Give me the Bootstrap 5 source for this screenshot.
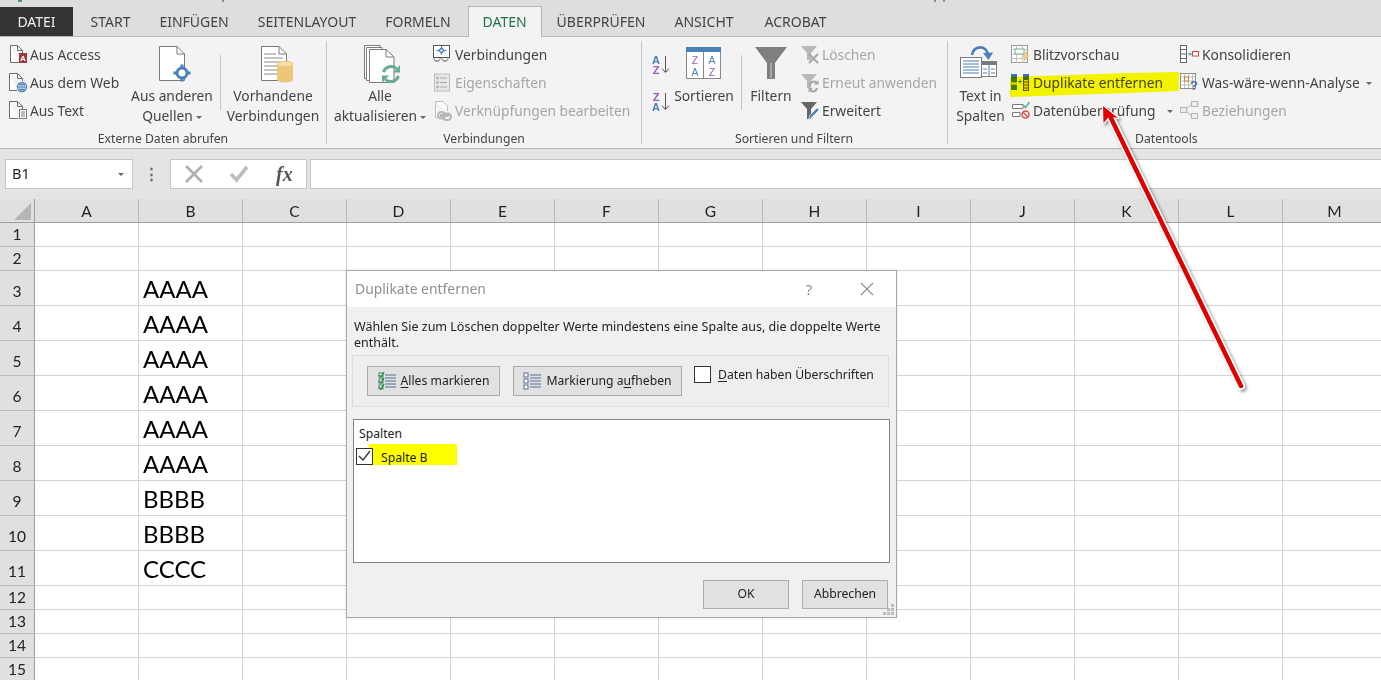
<!DOCTYPE html>
<html lang="de">
<head>
<meta charset="utf-8">
<title>Duplikate entfernen</title>
<link href="https://cdn.jsdelivr.net/npm/bootstrap@5.3.0/dist/css/bootstrap.min.css" rel="stylesheet">
<style>
html,body{width:1381px;height:680px;overflow:hidden;background:#fff;}
body{position:relative;font-family:"Noto Sans","Open Sans",sans-serif;font-size:13.8px;color:#444;}
.tabbar{height:37px;background:#dedede;border-bottom:1px solid #b5b5b5;padding-top:7px;}
.tab-item{height:30px;line-height:29px;font-size:14px;color:#444;padding:0 14.5px;text-align:center;white-space:nowrap;}
.tab-file{width:73px;padding:0;background:#333;color:#f0f0f0;height:29px;margin-right:3px;}
.tab-active{background:#f3f3f3;border:1px solid #b5b5b5;border-bottom:0;color:#217346;margin:-1px .5px 0 2.5px;height:31px;padding:0;width:74px;}
.tab-last{margin-left:2px;}
.ribbon{height:112px;background:#f3f3f3;border-bottom:1px solid #b5b5b5;position:relative;}
.rgroup{margin-top:4px;height:103px;border-right:1px solid #c6c6c6;flex:none;}
.rg1{width:327px}.rg2{width:315px}.rg3{width:306px}.rg4{width:433px;border-right:0}
.rbody{height:87px;}
.rlabel{height:16px;line-height:22px;font-size:12.2px;text-align:center;color:#444;white-space:nowrap;}
.rstack{flex:none;}
.ritem{height:28px;white-space:nowrap;gap:2px;}
.ritem svg{flex:none;}
.off{color:#a6a6a6;}
.rbig{flex:none;height:85px;text-align:center;line-height:20px;white-space:nowrap;}
.rbig svg{display:block;}
.rsep{flex:none;width:1px;height:55px;background:#c6c6c6;margin-top:14px;}
.drop{display:inline-block;width:0;height:0;border:3px solid transparent;border-top:3.5px solid #666;border-bottom:0;margin-left:3px;vertical-align:2px;}
.hi{position:absolute;left:1009px;top:-3px;mix-blend-mode:multiply;pointer-events:none;}
.fbar{height:50px;background:#e4e4e4;padding:10px 0 0 5px;}
.fbox{height:30px;background:#fff;border:1px solid #c6c6c6;flex:none;}
.fname{width:128px;padding:0 8px 0 6px;font-size:14.6px;color:#222;}
.fdots{width:37px;flex:none;color:#666;font-size:15px;font-weight:700;text-align:center;line-height:28px;}
.ficons{width:137px;}
.fx-mark{font-family:"Liberation Serif",serif;font-style:italic;font-weight:700;font-size:20px;color:#555;line-height:1;}
.fmain{margin-left:3px;flex:1 1 auto;border-right:0;}
.sheetwrap{width:1381px;height:481px;overflow:hidden;}
.sheet{table-layout:fixed;width:1387px;border-collapse:separate;border-spacing:0;}
.sheet th,.sheet td{padding:0;border-right:1px solid #d4d4d4;border-bottom:1px solid #d4d4d4;font-weight:400;}
.sheet thead th{height:24px;background:#e0e0e0;text-align:center;font-size:15.5px;font-family:"Lato",sans-serif;color:#222;border-bottom:1px solid #9f9f9f;border-right:1px solid #b8b8b8;line-height:21px;padding-top:2px;}
.sheet thead .corner{width:35px;padding-top:0;line-height:1;position:relative;border-right:1px solid #9f9f9f;}
.sheet tbody th{width:35px;background:#e0e0e0;text-align:center;vertical-align:bottom;font-size:15.5px;font-family:"Lato",sans-serif;color:#222;border-right:1px solid #9f9f9f;border-bottom:1px solid #b8b8b8;line-height:22px;}
.sheet td{font-family:"Lato",sans-serif;font-size:24px;color:#000;padding-left:4px;line-height:33px;vertical-align:bottom;white-space:nowrap;}
.r-s{height:24px}.r-t{height:35px}
.sheet tbody .r-t th{padding-bottom:3px}
.sheet tbody .r-s th{padding-bottom:1px}
.dlg{position:absolute;left:346px;top:270px;width:551px;height:348px;background:#f0f0f0;border:1px solid #a8a8a8;box-shadow:0 0 2px rgba(0,0,0,.15);}
.dlg-head{height:36px;background:#fff;padding:0 0 0 8px;color:#8f8f8f;font-size:13.9px;}
.dlg-q{width:12px;margin-left:auto;color:#8f8f8f;font-size:15px;text-align:center;margin-right:45px;}
.dlg-x{margin-right:22px;}
.dlg-text{font-size:12.5px;line-height:16px;color:#222;padding:12px 6px 0 7px;height:48px;white-space:nowrap;}
.dlg-panel{margin-left:5px;width:537px;height:52px;background:#eee;border:1px solid #dcdcdc;padding:10px 0 0 14px;}
.dlg-btn{height:30px;background:#e1e1e1;border:1px solid #adadad;border-radius:0;color:#222;font-size:12.2px;padding:0;flex:none;--bs-btn-hover-bg:#e1e1e1;}
.b-all{width:133px;margin-right:13px}.b-none{width:169px;margin-right:12px}
.tick{width:17px;height:17px;border:1px solid #333;background:#fff;flex:none;}
.chk-label{font-size:12.2px;color:#222;margin:1px 0 0 7px;line-height:16px;white-space:nowrap;}
.dlg-list{margin:12px 0 0 6px;width:537px;height:144px;background:#fff;border:1px solid #82828f;font-size:12.2px;color:#222;position:relative;padding:5px 0 0 5px;}
.list-row{margin:2px 0 0 -3px;height:22px;position:relative;}
.list-mark{position:absolute;left:13px;top:-1px;width:88px;height:21px;background:#ff0;}
.list-row .tick{position:relative;}
.list-row span{position:relative;margin-left:8px;padding-top:4px;}
.dlg-foot{padding-top:17px;margin-left:356px;gap:13px;}
.dlg-ok{width:86px;height:29px;}
.grip{position:absolute;right:1px;bottom:1px;}
.arrow{position:absolute;left:0;top:0;pointer-events:none;}
u{text-underline-offset:2px;}
</style>
</head>
<body>
<nav class="tabbar d-flex">
  <div class="tab-item tab-file">DATEI</div>
  <div class="tab-item">START</div>
  <div class="tab-item">EINFÜGEN</div>
  <div class="tab-item">SEITENLAYOUT</div>
  <div class="tab-item">FORMELN</div>
  <div class="tab-item tab-active">DATEN</div>
  <div class="tab-item">ÜBERPRÜFEN</div>
  <div class="tab-item">ANSICHT</div>
  <div class="tab-item tab-last">ACROBAT</div>
</nav>

<section class="ribbon d-flex">
  <div class="rgroup rg1">
    <div class="rbody d-flex">
      <div class="rstack" style="margin-left:8px;width:123px">
        <div class="ritem d-flex align-items-center">
          <svg width="20" height="20" viewBox="0 0 20 20"><path d="M2.5.5H9.5L14.5 5.5V8M9.5.5V5.5H14.5M2.5.5V17.5H11" fill="#fff" stroke="#6e6e6e"/><rect x="11" y="8" width="8" height="10" fill="#a4373a"/><text x="15" y="16" text-anchor="middle" font-size="8" font-weight="700" fill="#fff" font-family="Liberation Sans">A</text></svg>
          <span>Aus Access</span></div>
        <div class="ritem d-flex align-items-center">
          <svg width="20" height="20" viewBox="0 0 20 20"><path d="M1.5.5H9.5L14.5 5.5V8M9.5.5V5.5H14.5M1.5.5V17.5H9" fill="#fff" stroke="#6e6e6e"/><circle cx="14" cy="14" r="4.6" fill="#fff" stroke="#4a7ebb" stroke-width="1.2"/><path d="M9.5 14H18.5M14 9.5V18.5M10.5 11.5H17.5M10.5 16.5H17.5" stroke="#4a7ebb" fill="none" stroke-width=".9"/><ellipse cx="14" cy="14" rx="2.2" ry="4.6" fill="none" stroke="#4a7ebb" stroke-width=".9"/></svg>
          <span>Aus dem Web</span></div>
        <div class="ritem d-flex align-items-center">
          <svg width="20" height="20" viewBox="0 0 20 20"><path d="M1.5.5H9.5L14.5 5.5V8M9.5.5V5.5H14.5M1.5.5V17.5H10" fill="#fff" stroke="#6e6e6e"/><rect x="11.5" y="8.5" width="7" height="9" fill="#fff" stroke="#7a7a7a"/><path d="M13 11H17M13 13H17M13 15H17" stroke="#7a7a7a"/></svg>
          <span>Aus Text</span></div>
      </div>
      <div class="rbig" style="width:82px">
        <svg width="82" height="45" viewBox="0 0 82 45"><path d="M28.5 5.5H46L53.5 13V39.5H28.5Z" fill="#fff" stroke="#7a7a7a"/><path d="M46 5.5V13H53.5" fill="none" stroke="#7a7a7a"/><circle cx="51" cy="32" r="5" fill="#fff" stroke="#4a80b8" stroke-width="3"/><path d="M51 23.5V27M51 37V40.5M42.5 32H46M56 32H59.5" stroke="#4a80b8" stroke-width="3"/></svg>
        Aus anderen<br>Quellen<span class="drop"></span>
      </div>
      <div class="rsep" style="margin-left:7px"></div>
      <div class="rbig" style="width:94px;margin-left:5px">
        <svg width="94" height="45" viewBox="0 0 94 45"><path d="M35.5 5.5H53L60.5 13V39.5H35.5Z" fill="#fff" stroke="#7a7a7a"/><path d="M53 5.5V13H60.5" fill="none" stroke="#7a7a7a"/><path d="M38 13H50M38 17H57M38 21H57M38 25H51M38 29H51M38 33H51" stroke="#8a8a8a"/><path d="M51 23V38.5C51 42.5 67 42.5 67 38.5V23Z" fill="#eec67a"/><ellipse cx="59" cy="23" rx="8" ry="2.6" fill="#f6dfae" stroke="#eec67a"/></svg>
        Vorhandene<br>Verbindungen
      </div>
    </div>
    <div class="rlabel" style="width:326px">Externe Daten abrufen</div>
  </div>

  <div class="rgroup rg2">
    <div class="rbody d-flex">
      <div class="rbig" style="width:94px;margin-left:6px">
        <svg width="94" height="45" viewBox="0 0 94 45"><path d="M31.5 4.5H47V37.5H31.5Z" fill="#fff" stroke="#7a7a7a"/><path d="M33.5 6.5H49V39.5H33.5Z" fill="#fff" stroke="#7a7a7a"/><path d="M36.5 8.5H53L61 16V41.5H36.5Z" fill="#fff" stroke="#7a7a7a"/><path d="M53 8.5V16H61" fill="none" stroke="#7a7a7a"/><path d="M50.500 31A8 8 0 0 1 63.500 27.500" fill="none" stroke="#6aab93" stroke-width="3"/><path d="M67 24V31.500H60Z" fill="#6aab93"/><path d="M65.500 35A8 8 0 0 1 52.500 38.500" fill="none" stroke="#6aab93" stroke-width="3"/><path d="M49 42V34.500H56Z" fill="#6aab93"/></svg>
        Alle<br>aktualisieren<span class="drop"></span>
      </div>
      <div class="rstack" style="margin-left:6px">
        <div class="ritem d-flex align-items-center">
          <svg width="20" height="20" viewBox="0 0 20 20"><rect x=".5" y=".5" width="16" height="12" fill="#fff" stroke="#555"/><path d="M8.500 3L11 5.500 8.500 8 6 5.500Z" fill="none" stroke="#4a7ebb" stroke-width="1.500"/><path d="M8.500 1V3M8.500 8V10M3.500 5.500H6M11 5.500H13.500" stroke="#4a7ebb"/><path d="M1 13.500C1 17 7 17 7 13.500M9 13.500C9 17 15 17 15 13.500" fill="none" stroke="#555"/></svg>
          <span>Verbindungen</span></div>
        <div class="ritem d-flex align-items-center off">
          <svg width="20" height="20" viewBox="0 0 20 20"><rect x="1.500" y="1" width="15" height="17" fill="#e6e6e6" stroke="#bdbdbd"/><path d="M7 5H14M7 9.500H14M7 14H14" stroke="#a8a8a8"/><circle cx="4.500" cy="5" r="1.200" fill="#a8a8a8"/><circle cx="4.500" cy="9.500" r="1.200" fill="#a8a8a8"/><circle cx="4.500" cy="14" r="1.200" fill="#a8a8a8"/></svg>
          <span>Eigenschaften</span></div>
        <div class="ritem d-flex align-items-center off">
          <svg width="20" height="20" viewBox="0 0 20 20"><path d="M2.500.5H10L14.500 5V10M2.500.5V16.500H5" fill="#fff" stroke="#bdbdbd"/><path d="M7 14.500H16" stroke="#b5b5b5" stroke-width="3"/><rect x="5" y="11" width="7" height="6.500" rx="3.200" fill="none" stroke="#b5b5b5" stroke-width="2"/><rect x="10" y="12.500" width="8" height="6.500" rx="3.200" fill="none" stroke="#b5b5b5" stroke-width="2"/></svg>
          <span>Verknüpfungen bearbeiten</span></div>
      </div>
    </div>
    <div class="rlabel" style="width:314px">Verbindungen</div>
  </div>

  <div class="rgroup rg3">
    <div class="rbody d-flex">
      <div class="rstack d-flex flex-column" style="margin-left:8px;padding-top:14px;gap:17px">
        <svg width="20" height="20" viewBox="0 0 20 20"><text x="6" y="9" text-anchor="middle" font-size="11" font-weight="700" fill="#4a80b8" font-family="Liberation Sans">A</text><text x="6" y="19" text-anchor="middle" font-size="11" font-weight="700" fill="#9a5bbd" font-family="Liberation Sans">Z</text><path d="M15.500 1V17M12 13.500L15.500 17.500 19 13.500" fill="none" stroke="#555"/></svg>
        <svg width="20" height="20" viewBox="0 0 20 20"><text x="6" y="9" text-anchor="middle" font-size="11" font-weight="700" fill="#9a5bbd" font-family="Liberation Sans">Z</text><text x="6" y="19" text-anchor="middle" font-size="11" font-weight="700" fill="#4a80b8" font-family="Liberation Sans">A</text><path d="M15.500 1V17M12 13.500L15.500 17.500 19 13.500" fill="none" stroke="#555"/></svg>
      </div>
      <div class="rbig" style="width:64px;margin-left:2px">
        <svg width="64" height="45" viewBox="0 0 64 45"><rect x="14.500" y="6.500" width="34" height="31" fill="#fff" stroke="#8a8a8a"/><rect x="14" y="6" width="35" height="5" fill="#4a80b8"/><path d="M31.500 11V37" stroke="#8a8a8a"/><text x="23" y="22.500" text-anchor="middle" font-size="10.400" fill="#9a5bbd" font-family="Liberation Sans">Z</text><text x="23" y="34.500" text-anchor="middle" font-size="10.400" fill="#4a80b8" font-family="Liberation Sans">A</text><text x="40" y="22.500" text-anchor="middle" font-size="10.400" fill="#4a80b8" font-family="Liberation Sans">A</text><text x="40" y="34.500" text-anchor="middle" font-size="10.400" fill="#9a5bbd" font-family="Liberation Sans">Z</text></svg>
        Sortieren
      </div>
      <div class="rsep" style="margin-left:5px"></div>
      <div class="rbig" style="width:48px;margin-left:5px">
        <svg width="48" height="45" viewBox="0 0 48 45"><path d="M8 6H40L28 22V38H20V22Z" fill="#7f7f7f"/><path d="M24 22V37" stroke="#a9a9a9" stroke-width="2"/></svg>
        Filtern
      </div>
      <div class="rstack" style="margin-left:5px">
        <div class="ritem d-flex align-items-center off">
          <svg width="20" height="20" viewBox="0 0 20 20"><path d="M1 1H17L11 8V15H7V8Z" fill="#b8b8b8"/><path d="M9 9L18 18M18 9L9 18" stroke="#a6a6a6" stroke-width="2"/></svg>
          <span>Löschen</span></div>
        <div class="ritem d-flex align-items-center off">
          <svg width="20" height="20" viewBox="0 0 20 20"><path d="M1 1H17L11 8V15H7V8Z" fill="#b8b8b8"/><path d="M10 13A4 4 0 0 1 17 10M17 15A4 4 0 0 1 10 17" fill="none" stroke="#a6a6a6" stroke-width="2"/><path d="M18.500 7V11.500H14ZM8.500 19.500V15H13Z" fill="#a6a6a6"/></svg>
          <span>Erneut anwenden</span></div>
        <div class="ritem d-flex align-items-center">
          <svg width="20" height="20" viewBox="0 0 20 20"><path d="M1 1H17L11 8V18H7V8Z" fill="#666"/><path d="M8 19L10 14 17 7 19 9 12 16Z" fill="#4a80b8" stroke="#f3f3f3" stroke-width=".6"/></svg>
          <span>Erweitert</span></div>
      </div>
    </div>
    <div class="rlabel" style="width:304px">Sortieren und Filtern</div>
  </div>

  <div class="rgroup rg4">
    <div class="rbody d-flex">
      <div class="rbig" style="width:55px;margin-left:5px">
        <svg width="55" height="45" viewBox="0 0 55 45"><rect x="7.500" y="16.500" width="21" height="20" fill="#fff" stroke="#7a7a7a"/><path d="M10 20H26M10 23H26M10 26H26M10 29H26M10 32H26" stroke="#4a7ebb"/><rect x="28.500" y="20.500" width="15" height="15" fill="#fff" stroke="#7a7a7a"/><rect x="28" y="20" width="16" height="4" fill="#7a7a7a"/><path d="M36 24V35M30 28H34M38 28H42M30 32H34M38 32H42" stroke="#4a7ebb"/><path d="M19 14C21 4 33 4 35 13" fill="none" stroke="#4a7ebb" stroke-width="2.600"/><path d="M30 12L35.500 19 40 11.500Z" fill="#4a7ebb"/></svg>
        Text in<br>Spalten
      </div>
      <div class="rstack" style="width:169px;margin-left:3px">
        <div class="ritem d-flex align-items-center">
          <svg width="20" height="20" viewBox="0 0 20 20"><rect x=".5" y=".5" width="16" height="17" fill="#fff" stroke="#9a9a9a"/><path d="M.5 4.500H16.500M.5 9H16.500M.5 13.500H16.500M5.500.5V17.500M11.500.5V17.500" stroke="#c4c4c4"/><rect x="4" y="4" width="9" height="5" fill="#fff" stroke="#6aab93"/><path d="M15 6L10.500 12.500H14L11.500 18.500 18 10.500H14.500L17.500 6Z" fill="#eec67a"/></svg>
          <span>Blitzvorschau</span></div>
        <div class="ritem d-flex align-items-center">
          <svg width="20" height="20" viewBox="0 0 20 20"><rect x="0" y="1" width="6" height="5" fill="#3f6fb5"/><rect x="0" y="6" width="6" height="11" fill="#3f7f3f"/><path d="M0 10.500H6" stroke="#e8c84a" stroke-width="2.500"/><rect x="12" y="1" width="6" height="5" fill="#3f6fb5"/><rect x="12.500" y="6.500" width="5" height="11" fill="#f0d050" stroke="#5a5a20"/><path d="M12.500 9H17.500M12.500 12H17.500M12.500 15H17.500" stroke="#5a5a20"/><path d="M7 8.500H11M9 6.500V10.500" stroke="#3f8f3f"/></svg>
          <span>Duplikate entfernen</span></div>
        <div class="ritem d-flex align-items-center">
          <svg width="20" height="20" viewBox="0 0 20 20"><path d="M1.500 3.500H12V7.500H1.500ZM1.500 11.500H9V15.500H1.500Z" fill="#fff" stroke="#7a7a7a"/><path d="M12 4L14.500 6.500 18.500 1" fill="none" stroke="#6aab93" stroke-width="1.600"/><circle cx="14.500" cy="13.500" r="3.500" fill="#fff" stroke="#d9534f" stroke-width="1.500"/><path d="M12 11L17 16" stroke="#d9534f" stroke-width="1.500"/></svg>
          <span>Datenüberprüfung</span><span class="drop" style="margin-left:9px"></span></div>
      </div>
      <div class="rstack">
        <div class="ritem d-flex align-items-center">
          <svg width="20" height="20" viewBox="0 0 20 20"><rect x=".5" y=".5" width="6" height="17" fill="#fff" stroke="#666"/><path d="M.5 4.500H6.500M.5 9H6.500M.5 13.500H6.500" stroke="#666"/><path d="M8 9H11M10 7.500L11.500 9 10 10.500" fill="none" stroke="#4a7ebb"/><rect x="12.500" y="6.500" width="6" height="4.500" fill="#fff" stroke="#d0492f"/></svg>
          <span>Konsolidieren</span></div>
        <div class="ritem d-flex align-items-center">
          <svg width="20" height="20" viewBox="0 0 20 20"><rect x=".5" y=".5" width="15" height="15" fill="#fff" stroke="#8a8a8a"/><path d="M.5 4H15.500M.5 8H15.500M.5 12H15.500M4.500.5V15.500M8.500.5V15.500M12.500.5V15.500" stroke="#bdbdbd"/><rect x="4.500" y="4" width="4" height="4" fill="#fff" stroke="#d87b2f"/><text x="14" y="17" text-anchor="middle" font-size="13" font-weight="700" fill="#3f74b5" font-family="Liberation Sans">?</text></svg>
          <span>Was-wäre-wenn-Analyse</span><span class="drop" style="margin-left:4px"></span></div>
        <div class="ritem d-flex align-items-center off">
          <svg width="20" height="20" viewBox="0 0 20 20"><rect x=".5" y="6.500" width="6" height="5" fill="#eee" stroke="#b5b5b5"/><rect x="11.500" y=".5" width="6" height="5" fill="#eee" stroke="#b5b5b5"/><rect x="11.500" y="12.500" width="6" height="5" fill="#eee" stroke="#b5b5b5"/><path d="M6.500 8L11.500 3M6.500 10L11.500 15" stroke="#b5b5b5"/></svg>
          <span>Beziehungen</span></div>
      </div>
    </div>
    <div class="rlabel" style="width:433px;padding-left:187px;padding-right:0;text-align:left">Datentools</div>
  </div>
  <svg class="hi" width="172" height="66" viewBox="0 0 172 66"><path d="M1 43L60 41 120 39 170 38V57L120 59 60 61 1 63Z" fill="#ff0"/></svg>
</section>

<section class="fbar d-flex">
  <div class="fbox fname d-flex align-items-center justify-content-between"><span>B1</span><span class="drop"></span></div>
  <div class="fdots">⋮</div>
  <div class="fbox ficons d-flex align-items-center">
    <svg style="margin-left:13px" width="20" height="20" viewBox="0 0 20 20"><path d="M2 2L18 18M18 2L2 18" stroke="#b0b0b0" stroke-width="2.600"/></svg>
    <svg style="margin-left:25px" width="20" height="20" viewBox="0 0 20 20"><path d="M2 10L7.500 16 18 3" fill="none" stroke="#bdbdbd" stroke-width="3.600"/></svg>
    <span class="fx-mark" style="margin-left:27px">fx</span>
  </div>
  <div class="fbox fmain"></div>
</section>

<div class="sheetwrap">
<table class="sheet">
  <thead><tr>
    <th class="corner"><svg class="d-block" style="margin:3px 0 0 14px" width="18" height="18" viewBox="0 0 18 18"><path d="M17 0V17H0Z" fill="#b5b5b5"/></svg></th>
    <th>A</th><th>B</th><th>C</th><th>D</th><th>E</th><th>F</th><th>G</th><th>H</th><th>I</th><th>J</th><th>K</th><th>L</th><th>M</th>
  </tr></thead>
  <tbody>
    <tr class="r-s"><th>1</th><td></td><td></td><td></td><td></td><td></td><td></td><td></td><td></td><td></td><td></td><td></td><td></td><td></td></tr>
    <tr class="r-s"><th>2</th><td></td><td></td><td></td><td></td><td></td><td></td><td></td><td></td><td></td><td></td><td></td><td></td><td></td></tr>
    <tr class="r-t"><th>3</th><td></td><td>AAAA</td><td></td><td></td><td></td><td></td><td></td><td></td><td></td><td></td><td></td><td></td><td></td></tr>
    <tr class="r-t"><th>4</th><td></td><td>AAAA</td><td></td><td></td><td></td><td></td><td></td><td></td><td></td><td></td><td></td><td></td><td></td></tr>
    <tr class="r-t"><th>5</th><td></td><td>AAAA</td><td></td><td></td><td></td><td></td><td></td><td></td><td></td><td></td><td></td><td></td><td></td></tr>
    <tr class="r-t"><th>6</th><td></td><td>AAAA</td><td></td><td></td><td></td><td></td><td></td><td></td><td></td><td></td><td></td><td></td><td></td></tr>
    <tr class="r-t"><th>7</th><td></td><td>AAAA</td><td></td><td></td><td></td><td></td><td></td><td></td><td></td><td></td><td></td><td></td><td></td></tr>
    <tr class="r-t"><th>8</th><td></td><td>AAAA</td><td></td><td></td><td></td><td></td><td></td><td></td><td></td><td></td><td></td><td></td><td></td></tr>
    <tr class="r-t"><th>9</th><td></td><td>BBBB</td><td></td><td></td><td></td><td></td><td></td><td></td><td></td><td></td><td></td><td></td><td></td></tr>
    <tr class="r-t"><th>10</th><td></td><td>BBBB</td><td></td><td></td><td></td><td></td><td></td><td></td><td></td><td></td><td></td><td></td><td></td></tr>
    <tr class="r-t"><th>11</th><td></td><td>CCCC</td><td></td><td></td><td></td><td></td><td></td><td></td><td></td><td></td><td></td><td></td><td></td></tr>
    <tr class="r-s"><th>12</th><td></td><td></td><td></td><td></td><td></td><td></td><td></td><td></td><td></td><td></td><td></td><td></td><td></td></tr>
    <tr class="r-s"><th>13</th><td></td><td></td><td></td><td></td><td></td><td></td><td></td><td></td><td></td><td></td><td></td><td></td><td></td></tr>
    <tr class="r-s"><th>14</th><td></td><td></td><td></td><td></td><td></td><td></td><td></td><td></td><td></td><td></td><td></td><td></td><td></td></tr>
    <tr class="r-s"><th>15</th><td></td><td></td><td></td><td></td><td></td><td></td><td></td><td></td><td></td><td></td><td></td><td></td><td></td></tr>
  </tbody>
</table>
</div>

<div class="dlg" role="dialog">
  <div class="dlg-head d-flex align-items-center">
    <span>Duplikate entfernen</span>
    <span class="dlg-q">?</span>
    <svg class="dlg-x" width="14" height="14" viewBox="0 0 14 14"><path d="M1 1L13 13M13 1L1 13" stroke="#8f8f8f" stroke-width="1.100"/></svg>
  </div>
  <div class="dlg-text">Wählen Sie zum Löschen doppelter Werte mindestens eine Spalte aus, die doppelte Werte<br>enthält.</div>
  <div class="dlg-panel d-flex align-items-start">
    <button type="button" class="btn dlg-btn b-all d-flex align-items-center justify-content-center gap-1">
      <svg width="19" height="18" viewBox="0 0 19 18"><path d="M7 3H18M7 6H18M7 9H18M7 12H18M7 15H18" stroke="#5a6f95" stroke-width="1.200"/><rect x="1" y="1" width="4" height="4" fill="#fff" stroke="#5a6f95"/><rect x="1" y="7" width="4" height="4" fill="#fff" stroke="#5a6f95"/><rect x="1" y="13" width="4" height="4" fill="#fff" stroke="#5a6f95"/><path d="M1 3L3 5 6 0M1 9L3 11 6 6M1 15L3 17 6 12" fill="none" stroke="#2ca02c" stroke-width="1.500"/></svg>
      <span><u>A</u>lles markieren</span>
    </button>
    <button type="button" class="btn dlg-btn b-none d-flex align-items-center justify-content-center gap-1">
      <svg width="19" height="18" viewBox="0 0 19 18"><path d="M7 3H18M7 6H18M7 9H18M7 12H18M7 15H18" stroke="#5a6f95" stroke-width="1.200"/><rect x="1" y="1" width="4" height="4" fill="#fff" stroke="#5a6f95"/><rect x="1" y="7" width="4" height="4" fill="#fff" stroke="#5a6f95"/><rect x="1" y="13" width="4" height="4" fill="#fff" stroke="#5a6f95"/></svg>
      <span>Markierung a<u>u</u>fheben</span>
    </button>
    <span class="tick d-block"></span>
    <span class="chk-label"><u>D</u>aten haben Überschriften</span>
  </div>
  <div class="dlg-list">
    <div>Spalten</div>
    <div class="list-row d-flex align-items-center">
      <div class="list-mark"></div>
      <div class="tick d-flex align-items-center justify-content-center"><svg width="13" height="12" viewBox="0 0 13 12"><path d="M1 6L5 10 12 1" fill="none" stroke="#333" stroke-width="1.300"/></svg></div>
      <span>Spalte B</span>
    </div>
  </div>
  <div class="dlg-foot d-flex">
    <button type="button" class="btn dlg-btn dlg-ok">OK</button>
    <button type="button" class="btn dlg-btn dlg-ok">Abbrechen</button>
  </div>
  <svg class="grip" width="12" height="12" viewBox="0 0 12 12"><path d="M8 0H11V3H8ZM4 4H7V7H4ZM8 4H11V7H8ZM0 8H3V11H0ZM4 8H7V11H4ZM8 8H11V11H8Z" fill="#bdbdbd"/></svg>
</div>

<svg class="arrow" width="1381" height="680" viewBox="0 0 1381 680">
  <defs><filter id="sh" x="-20%" y="-20%" width="140%" height="140%"><feDropShadow dx="2" dy="2" stdDeviation="1.500" flood-color="#000" flood-opacity=".4"/></filter></defs>
  <path d="M18 0H22V2H18Z" fill="#4a9a6a"/><path d="M222 0H224V2H222ZM934 0H936V2H934ZM943 0H945V2H943Z" fill="#8a8a8a"/>
  <g filter="url(#sh)">
    <path d="M1103 106L1118 118 1109 116.500 1103.500 123Z" fill="#e00000" stroke="#fff" stroke-width="2" stroke-linejoin="round"/>
    <path d="M1241 386L1110 116" stroke="#fff" stroke-width="7.500" stroke-linecap="round" fill="none"/>
    <path d="M1103 106L1118 118 1109 116.500 1103.500 123Z" fill="#e00000"/>
    <path d="M1241 386L1109 114" stroke="#e00000" stroke-width="4.500" stroke-linecap="round" fill="none"/>
  </g>
</svg>

<script src="https://cdn.jsdelivr.net/npm/bootstrap@5.3.0/dist/js/bootstrap.bundle.min.js"></script>
</body>
</html>
